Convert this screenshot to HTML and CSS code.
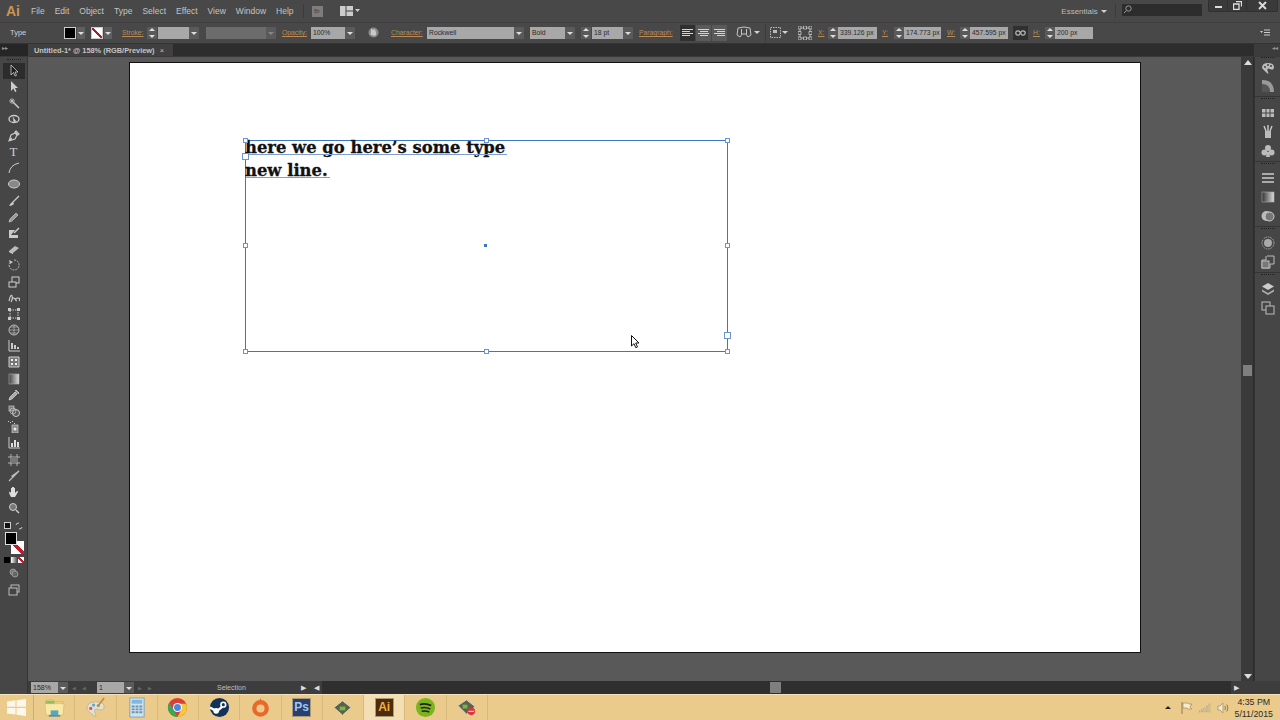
FILE: index.html
```html
<!DOCTYPE html>
<html lang="en">
<head>
    <meta charset="UTF-8">
    <title>Adobe Illustrator</title>
    <link rel="stylesheet" href="styles.css">
</head>
<body>
    <div class="app">
        <!-- menu bar -->
        <div class="menubar">
            <span class="ai-logo">Ai</span>
            <nav class="menu">
                <span>File</span><span>Edit</span><span>Object</span><span>Type</span><span>Select</span><span>Effect</span><span>View</span><span>Window</span><span>Help</span>
            </nav>
            <i class="menu-sep"></i>
            <span class="bridge">Br</span>
            <svg class="arrange" width="20" height="12" viewBox="0 0 20 12"><rect x="0" y="1" width="13" height="10" fill="#ccc"/><path d="M6 1v10M6 6h7" stroke="#444"/><path d="M15 4h5l-2.500 3z" fill="#ccc"/></svg>
            <span class="essentials">Essentials <b class="caret"></b></span>
            <i class="menu-sep sep-right"></i>
            <div class="search">
                <svg width="9" height="9" viewBox="0 0 9 9"><circle cx="5.500" cy="3.500" r="2.700" fill="none" stroke="#999"/><path d="M3.500 5.500L1 8" stroke="#999"/></svg>
            </div>
            <div class="win-btns">
                <span class="win-btn"><i class="win-min"></i></span>
                <span class="win-btn"><svg width="9" height="9" viewBox="0 0 9 9"><path d="M3 .5h5.500v5M.5 3h5.500v5.500h-5.500z" fill="none" stroke="#ddd" stroke-width="1.300"/></svg></span>
                <span class="win-btn win-close"><svg width="9" height="9" viewBox="0 0 9 9"><path d="M1 1l7 7M8 1l-7 7" stroke="#ddd" stroke-width="1.800"/></svg></span>
            </div>
        </div>

        <!-- control bar -->
        <div class="controlbar">
            <span class="ctl-type">Type</span>
            <span class="swatch swatch-black"></span><b class="drop"></b>
            <span class="swatch swatch-none ctl-stroke-swatch"></span><b class="drop"></b>
            <span class="label ctl-stroke">Stroke:</span>
            <span class="spin"></span><span class="field field-stroke"></span><b class="drop-box"></b>
            <span class="field field-dark"></span><b class="drop-box drop-dark"></b>
            <span class="label ctl-opacity">Opacity:</span>
            <span class="field field-opacity">100%</span><b class="drop-box"></b>
            <svg class="globe" width="11" height="11" viewBox="0 0 11 11"><circle cx="5.500" cy="5.500" r="5" fill="#8a8a8a"/><path d="M3 1.500q2 2 3 1t2 3-3 3-2-3z" fill="#c9c9c9"/></svg>
            <span class="label ctl-char">Character:</span>
            <span class="field field-font">Rockwell</span><b class="drop-box"></b>
            <span class="field field-weight">Bold</span><b class="drop-box"></b>
            <span class="spin ctl-size"></span><span class="field field-size">18 pt</span><b class="drop-box"></b>
            <span class="label ctl-para">Paragraph:</span>
            <div class="align-group">
                <span class="align-btn align-on"><i></i><i class="short"></i><i></i><i class="short"></i></span>
                <span class="align-btn"><i></i><i class="short mid"></i><i></i><i class="short mid"></i></span>
                <span class="align-btn"><i></i><i class="short end"></i><i></i><i class="short end"></i></span>
            </div>
            <svg class="ctl-envelope" width="16" height="13" viewBox="0 0 16 13"><path d="M2 2q6-2 12 0l1 7-3 2-2-3H6l-2 3-3-2zM5.500 3v5M10.500 3v5" fill="none" stroke="#c4c4c4"/></svg>
            <b class="caret ctl-caret"></b>
            <i class="ctl-sep"></i>
            <svg class="ctl-transform" width="11" height="11" viewBox="0 0 11 11"><rect x=".5" y=".5" width="10" height="10" fill="none" stroke="#bbb" stroke-dasharray="1.500 1"/><rect x="3" y="3" width="4" height="3" fill="#bbb"/></svg>
            <b class="caret"></b>
            <svg class="ctl-ref" width="14" height="14" viewBox="0 0 14 14"><path d="M2 2h10v10H2z" fill="none" stroke="#aaa"/><path d="M0 0h3v3H0zM5.500 0h3v3h-3zM11 0h3v3h-3zM0 5.500h3v3H0zM11 5.500h3v3h-3zM0 11h3v3H0zM5.500 11h3v3h-3zM11 11h3v3h-3z" fill="#444" stroke="#ccc" stroke-width=".8"/></svg>
            <span class="label ctl-x">X:</span>
            <span class="spin spin-tight"></span><span class="field field-x">339.126 px</span>
            <span class="label ctl-y">Y:</span>
            <span class="spin spin-tight"></span><span class="field field-y">174.773 px</span>
            <span class="label ctl-w">W:</span>
            <span class="spin spin-tight"></span><span class="field field-w">457.595 px</span>
            <span class="link-btn"><svg width="11" height="6" viewBox="0 0 11 6"><circle cx="3" cy="3" r="2.200" fill="none" stroke="#bbb" stroke-width="1.200"/><circle cx="8" cy="3" r="2.200" fill="none" stroke="#bbb" stroke-width="1.200"/></svg></span>
            <span class="label ctl-h">H:</span>
            <span class="spin spin-tight"></span><span class="field field-h">200 px</span>
            <svg class="ctl-menu" width="10" height="7" viewBox="0 0 10 7"><path d="M4 1h6M4 3.500h6M4 6h6" stroke="#ccc"/><path d="M0 2h3L1.500 4z" fill="#ccc"/></svg>
        </div>

        <!-- document tab -->
        <div class="tabstrip">
            <div class="corner">&#9656;&#9656;</div>
            <div class="doc-tab">Untitled-1* @ 158% (RGB/Preview) <span class="tab-x">&times;</span></div>
            <div class="corner corner-right">&#9666;&#9666;</div>
        </div>

        <div class="workspace">
            <!-- tools -->
            <aside class="tools" id="tools">
                <i class="grip"></i>
                <span class="tool tool-on"><svg viewBox="0 0 12 12"><path d="M3 0v10l2.500-2.500L7 11l1.500-.6L7 7h3z" fill="#1f1f1f" stroke="#ccc" stroke-width=".8"/></svg></span>
                <span class="tool"><svg viewBox="0 0 12 12"><path d="M3 0v10l2.500-2.500L7 11l1.500-.6L7 7h3z" fill="#ccc"/></svg></span>
                <span class="tool"><svg viewBox="0 0 12 12"><path d="M5 5l6 6" stroke="#ccc" stroke-width="1.500"/><path d="M4 1v6M1 4h6M2 2l4 4M6 2L2 6" stroke="#ccc" stroke-width=".8"/></svg></span>
                <span class="tool tool-end"><svg viewBox="0 0 12 12"><ellipse cx="6" cy="5" rx="5" ry="3.500" fill="none" stroke="#ccc" stroke-width="1.300"/><path d="M5 3l1 6 1.500-2 2 2" fill="#ccc" stroke="#ccc" stroke-width=".5"/></svg></span>
                <span class="tool"><svg viewBox="0 0 12 12"><path d="M1 11l2-6 4-2 2 2-2 4zM8 1l3 3-1 1-3-3zM1 11l3-3" fill="none" stroke="#ccc" stroke-width="1.100"/></svg></span>
                <span class="tool tool-t">T</span>
                <span class="tool"><svg viewBox="0 0 12 12"><path d="M1 11Q2 3 11 1" fill="none" stroke="#ccc"/></svg></span>
                <span class="tool"><svg viewBox="0 0 12 12"><ellipse cx="6" cy="6" rx="5.500" ry="4" fill="#888" stroke="#ccc"/></svg></span>
                <span class="tool"><svg viewBox="0 0 12 12"><path d="M11 1L4 8" stroke="#ccc" stroke-width="1.300"/><path d="M5 7Q2 8 1 11q3 0 5-2z" fill="#ccc"/></svg></span>
                <span class="tool"><svg viewBox="0 0 12 12"><path d="M1 11l1-3 6-6 2 2-6 6z" fill="#999" stroke="#ccc" stroke-width=".7"/></svg></span>
                <span class="tool"><svg viewBox="0 0 12 12"><path d="M1 3h6L3 8h7v3H1z" fill="#ccc"/><path d="M6 6l5-5" stroke="#ccc" stroke-width="1.500"/></svg></span>
                <span class="tool tool-end"><svg viewBox="0 0 12 12"><path d="M1 8l6-5 4 2-6 5z" fill="#bbb"/><path d="M1 8l4 2v1L1 9z" fill="#eee"/></svg></span>
                <span class="tool"><svg viewBox="0 0 12 12"><path d="M6 1a5 5 0 1 1-4.500 3" fill="none" stroke="#bbb" stroke-dasharray="2 1"/><path d="M1 1l1 4 3-2z" fill="#ccc"/></svg></span>
                <span class="tool"><svg viewBox="0 0 12 12"><rect x="4" y="1" width="7" height="6" fill="none" stroke="#ccc"/><rect x="1" y="6" width="7" height="5" fill="#444" stroke="#ccc"/></svg></span>
                <span class="tool"><svg viewBox="0 0 12 12"><path d="M1 9Q3 1 4 4T3 10q2-6 4-3t1 1 2-2 1 3" fill="none" stroke="#ccc" stroke-width="1.100"/></svg></span>
                <span class="tool"><svg viewBox="0 0 12 12"><rect x="2" y="2" width="8" height="8" fill="none" stroke="#ccc" stroke-dasharray="1.500 1"/><path d="M0 0h3v3H0zM9 0h3v3H9zM0 9h3v3H0zM9 9h3v3H9z" fill="#ccc"/></svg></span>
                <span class="tool"><svg viewBox="0 0 12 12"><circle cx="6" cy="6" r="5" fill="none" stroke="#bbb"/><path d="M1 6h10M6 1v10M2 3h8M2 9h8" stroke="#bbb" stroke-width=".7"/></svg></span>
                <span class="tool"><svg viewBox="0 0 12 12"><path d="M1 0v11h11" fill="none" stroke="#ccc"/><path d="M3 3h2v6H3zM6 5h2v4H6zM9 7h2v2H9z" fill="#ccc"/></svg></span>
                <span class="tool"><svg viewBox="0 0 12 12"><path d="M1 1h10v10H1z" fill="#777" stroke="#ccc"/><path d="M3 3h2v2H3zM7 3h2v2H7zM3 7h2v2H3zM7 7h2v2H7z" fill="#eee"/></svg></span>
                <span class="tool"><svg viewBox="0 0 12 12"><defs><linearGradient id="toolgrad"><stop offset="0" stop-color="#444"/><stop offset="1" stop-color="#ddd"/></linearGradient></defs><rect x="1" y="1" width="10" height="10" fill="url(#toolgrad)" stroke="#aaa" stroke-width=".6"/></svg></span>
                <span class="tool"><svg viewBox="0 0 12 12"><path d="M1 11l1-3 5-5 2 2-5 5zM7 2l1-1 3 3-1 1" fill="#aaa" stroke="#ddd" stroke-width=".7"/></svg></span>
                <span class="tool"><svg viewBox="0 0 12 12"><rect x="1" y="1" width="5" height="5" fill="#777" stroke="#ccc" stroke-width=".7"/><circle cx="8" cy="8" r="3.500" fill="#555" stroke="#ccc"/><circle cx="5" cy="6" r="3" fill="none" stroke="#ccc" stroke-width=".7"/></svg></span>
                <span class="tool"><svg viewBox="0 0 12 12"><rect x="4" y="4" width="6" height="8" fill="#888" stroke="#ccc" stroke-width=".7"/><circle cx="7" cy="8" r="1.500" fill="#eee"/><path d="M0 0h1v1H0zM2 1h1v1H2zM4 0h1v1H4zM6 2h1v1H6z" fill="#ccc"/></svg></span>
                <span class="tool"><svg viewBox="0 0 12 12"><path d="M1 0v11h11" fill="none" stroke="#ccc"/><path d="M3 6h2v4H3zM6 3h2v7H6zM9 5h2v5H9z" fill="#ddd"/></svg></span>
                <span class="tool"><svg viewBox="0 0 12 12"><path d="M3 0v12M9 0v12M0 3h12M0 9h12" stroke="#ccc" stroke-width=".8"/><rect x="3" y="3" width="6" height="6" fill="#777"/></svg></span>
                <span class="tool"><svg viewBox="0 0 12 12"><path d="M11 1L5 7 4 6zM5 7L1 11" stroke="#bbb" stroke-width="1.300"/></svg></span>
                <span class="tool"><svg viewBox="0 0 12 12"><path d="M3 11Q1 8 1 6q1-1 2 1V2h1v3-4h1v4-4h1v4-3h1v5l2-2q1 0 1 1l-3 5z" fill="#ddd"/></svg></span>
                <span class="tool"><svg viewBox="0 0 12 12"><circle cx="5" cy="5" r="3.500" fill="#777" stroke="#ccc"/><path d="M8 8l3 3" stroke="#ccc" stroke-width="1.500"/></svg></span>
                <div class="colors">
                    <div class="color-mini">
                        <span class="mini-swap"></span>
                        <svg width="8" height="8" viewBox="0 0 8 8"><path d="M1 3q0-2 3-2M7 5q0 2-3 2" fill="none" stroke="#ccc"/></svg>
                    </div>
                    <div class="fillstroke">
                        <span class="fs-stroke"></span>
                        <span class="fs-fill"></span>
                    </div>
                    <div class="color-modes"><i class="mode-black"></i><i class="mode-grad"></i><i class="mode-none"></i></div>
                    <span class="tool"><svg viewBox="0 0 12 12"><circle cx="5" cy="5" r="3" fill="#777" stroke="#999"/><circle cx="7" cy="7" r="3" fill="#666" stroke="#999"/></svg></span>
                    <span class="tool"><svg viewBox="0 0 12 12"><rect x="3" y="1" width="8" height="7" fill="none" stroke="#bbb"/><rect x="1" y="4" width="8" height="7" fill="#444" stroke="#bbb"/></svg></span>
                </div>
            </aside>

            <!-- pasteboard with artboard -->
            <main class="pasteboard">
                <div class="artboard">
                    <div class="textframe">
                        <p class="frame-text">here we go here&rsquo;s some type<br>new line.</p>
                        <i class="baseline base-1"></i>
                        <i class="baseline base-2"></i>
                        <i class="handle h-tl"></i><i class="handle h-tc"></i><i class="handle h-tr"></i>
                        <i class="handle h-ml"></i><i class="handle h-mr"></i>
                        <i class="handle h-bl"></i><i class="handle h-bc"></i><i class="handle h-br"></i>
                        <i class="port port-in"></i><i class="port port-out"></i>
                        <i class="center-dot"></i>
                    </div>
                    <svg class="cursor" width="9" height="14" viewBox="0 0 9 14"><path d="M.5.500v10.500l2.500-2.300 1.800 4 1.700-.8-1.800-3.900h3.300z" fill="#fff" stroke="#111"/></svg>
                </div>
            </main>

            <div class="vscroll">
                <b class="arrow-up"></b>
                <i class="thumb-v"></i>
                <b class="arrow-down"></b>
            </div>

            <!-- docked panels -->
            <aside class="panels">
                <div class="panel-group panel-first">
                    <i class="grip"></i>
                    <svg viewBox="0 0 14 14"><path d="M1 8q0-5 6-5t6 4-4 2-2 3-6-4z" fill="#bbb"/><circle cx="4" cy="7" r="1" fill="#444"/><circle cx="7" cy="5" r="1" fill="#444"/><circle cx="10" cy="6" r="1" fill="#444"/></svg>
                    <svg viewBox="0 0 14 14"><path d="M1 13V1q12 0 12 12z" fill="#999"/><path d="M1 13V5q8 0 8 8z" fill="#555"/></svg>
                </div>
                <div class="panel-group">
                    <i class="grip"></i>
                    <svg viewBox="0 0 14 14"><rect x="1" y="3" width="12" height="8" fill="#bbb"/><path d="M5 3v8M9 3v8M1 7h12" stroke="#444"/></svg>
                    <svg viewBox="0 0 14 14"><path d="M4 6h6v7H4z" fill="#bbb"/><path d="M5 6L3 1M7 6V0M9 6l2-5" stroke="#ccc" stroke-width="1.400"/></svg>
                    <svg viewBox="0 0 14 14"><circle cx="7" cy="4" r="3" fill="#bbb"/><circle cx="3.500" cy="8.500" r="3" fill="#bbb"/><circle cx="10.500" cy="8.500" r="3" fill="#bbb"/><path d="M6 8h2l1 5H5z" fill="#bbb"/></svg>
                </div>
                <div class="panel-group">
                    <i class="grip"></i>
                    <svg viewBox="0 0 14 14"><path d="M1 3h12M1 7h12M1 11h12" stroke="#ccc" stroke-width="1.300"/></svg>
                    <svg viewBox="0 0 14 14"><defs><linearGradient id="pgrad"><stop offset="0" stop-color="#333"/><stop offset="1" stop-color="#ddd"/></linearGradient></defs><rect x="1" y="2" width="12" height="10" fill="url(#pgrad)" stroke="#aaa" stroke-width=".6"/></svg>
                    <svg viewBox="0 0 14 14"><circle cx="5.500" cy="7" r="5" fill="#bbb"/><circle cx="8.500" cy="7.500" r="4.500" fill="#777" stroke="#ccc"/></svg>
                </div>
                <div class="panel-group">
                    <i class="grip"></i>
                    <svg viewBox="0 0 14 14"><circle cx="7" cy="7" r="6" fill="none" stroke="#aaa" stroke-dasharray="1.500 1"/><circle cx="7" cy="7" r="4" fill="#aaa"/></svg>
                    <svg viewBox="0 0 14 14"><path d="M6 1h7v8" fill="none" stroke="#bbb"/><path d="M5 1v4H1v8h8V9h4" fill="none" stroke="#bbb"/><rect x="1" y="6" width="7" height="7" fill="#777" stroke="#bbb"/></svg>
                </div>
                <div class="panel-group panel-last">
                    <i class="grip"></i>
                    <svg viewBox="0 0 14 14"><path d="M7 1l6 3.500L7 8 1 4.500z" fill="#ccc"/><path d="M1 7.500L7 11l6-3.500v2L7 13 1 9.500z" fill="#aaa"/></svg>
                    <svg viewBox="0 0 14 14"><rect x="1" y="1" width="8" height="8" fill="none" stroke="#bbb"/><rect x="5" y="5" width="8" height="8" fill="#444" stroke="#bbb"/></svg>
                </div>
            </aside>
        </div>

        <!-- status bar -->
        <div class="statusbar">
            <span class="status-side"></span>
            <span class="field field-zoom">158%</span><b class="drop-box"></b>
            <span class="nav nav-first">&#9664;</span><span class="nav">&#9664;</span>
            <span class="field field-page">1</span><b class="drop-box"></b>
            <span class="nav">&#9654;</span><span class="nav">&#9654;</span>
            <span class="status-text">Selection</span>
            <span class="status-arrow">&#9654;</span>
            <span class="status-arrow left">&#9664;</span>
            <div class="hscroll"><i class="thumb-h"></i></div>
            <span class="status-arrow right">&#9654;</span>
        </div>

        <!-- windows taskbar -->
        <footer class="taskbar">
            <span class="start">
                <svg width="19" height="17" viewBox="0 0 19 17"><path d="M0 2.500L8.500 1.300v6.500H0zM9.500 1.200L19 0v7.800H9.500zM0 9h8.500v6.600L0 14.400zM9.500 9H19v8l-9.500-1.300z" fill="#fdf7ea"/></svg>
            </span>
            <span class="task">
                <svg viewBox="0 0 22 22"><path d="M2 3h7l2 2h9v5H2z" fill="#f1d878" stroke="#c9a94e" stroke-width=".6"/><path d="M1 7h20l-1 12H2z" fill="#f8e9a6" stroke="#cfb45e" stroke-width=".6"/><path d="M2 4h9v3H2z" fill="#8fbf6e"/><path d="M7 14h8v5H7z" fill="#58a6c4"/><path d="M5 19h12v1.500H5z" fill="#3f86a6"/></svg>
            </span>
            <span class="task">
                <svg viewBox="0 0 22 22"><path d="M2 13q0-8 9-8t9 5-6 3-3 5-9-5z" fill="#e6e0d2" stroke="#a9a08e" stroke-width=".6"/><circle cx="6" cy="12" r="1.700" fill="#d9534f"/><circle cx="9" cy="8.500" r="1.700" fill="#5aa9c9"/><circle cx="14" cy="9" r="1.700" fill="#6fb35a"/><path d="M20 1l-6 8" stroke="#c98b3c" stroke-width="1.800"/></svg>
            </span>
            <span class="task">
                <svg viewBox="0 0 22 22"><rect x="4" y="1" width="15" height="20" fill="#cfe3ef" stroke="#7fa3bd"/><rect x="6" y="3" width="11" height="4" fill="#7fb8dc"/><path d="M6 9h3v2H6zM10 9h3v2h-3zM14 9h3v2h-3zM6 12h3v2H6zM10 12h3v2h-3zM14 12h3v2h-3zM6 15h3v2H6zM10 15h3v2h-3zM14 15h3v2h-3z" fill="#6f95b0"/></svg>
            </span>
            <span class="task">
                <svg viewBox="0 0 22 22"><circle cx="11" cy="11" r="10" fill="#d93f36"/><path d="M11 21A10 10 0 0 1 2.300 6L7 13l4 8z" fill="#3ea552"/><path d="M11 21a10 10 0 0 0 9-14H11l4 6z" fill="#f5c93c"/><circle cx="11" cy="11" r="4.700" fill="#fff"/><circle cx="11" cy="11" r="3.600" fill="#4a87e0"/></svg>
            </span>
            <span class="task">
                <svg viewBox="0 0 22 22"><circle cx="11" cy="11" r="10" fill="#12335a"/><path d="M1 11l7 4 5-4 3-4" stroke="#fff" stroke-width="2.500" fill="none"/><circle cx="15" cy="8" r="3.300" fill="#fff"/><circle cx="15" cy="8" r="1.600" fill="#12335a"/><circle cx="7.500" cy="14.500" r="3" fill="#fff"/></svg>
            </span>
            <span class="task">
                <svg viewBox="0 0 22 22"><circle cx="11" cy="12" r="6.500" fill="none" stroke="#e9692c" stroke-width="4.500"/><path d="M11 1l2 5h-4z" fill="#e9692c"/></svg>
            </span>
            <span class="task">
                <span class="app-ps">Ps</span>
            </span>
            <span class="task">
                <svg viewBox="0 0 22 22"><path d="M2 11l9-7 9 7-9 8z" fill="#59604d" stroke="#d9d4c4"/><path d="M8 10h6v4H8z" fill="#79b83a"/></svg>
            </span>
            <span class="task task-on">
                <span class="app-ai">Ai</span>
            </span>
            <span class="task">
                <svg viewBox="0 0 22 22"><circle cx="11" cy="11" r="10" fill="#7ab51d"/><path d="M5 8q6-2 12 1M6 11.500q5-1.500 10 1M7 15q4-1 8 .8" fill="none" stroke="#222" stroke-width="1.700"/></svg>
            </span>
            <span class="task">
                <svg viewBox="0 0 22 22"><path d="M2 9l9-6 9 7-9 8z" fill="#5c6250" stroke="#d9d4c4"/><path d="M7 8h5v4H7z" fill="#79b83a"/><circle cx="16" cy="15" r="4" fill="#d9363a"/><path d="M13 15h6" stroke="#eee"/></svg>
            </span>
            <div class="tray">
                <b class="tray-up"></b>
                <svg width="12" height="12" viewBox="0 0 12 12"><path d="M1 0v12" stroke="#8b7a50"/><path d="M2 1h5l1 1h3l-2 3 2 2H7L6 6H2z" fill="#f6ead0" stroke="#8b7a50" stroke-width=".6"/></svg>
                <svg width="12" height="10" viewBox="0 0 12 10"><path d="M0 9h1V8H0zM2.500 9h1V6.500h-1zM5 9h1V5H5zM7.500 9h1V3h-1zM10 9h1V1h-1z" fill="#f8f0dc" stroke="#8b7a50" stroke-width=".4"/></svg>
                <svg width="12" height="12" viewBox="0 0 12 12"><path d="M1 4h2l3-3v10L3 8H1z" fill="#f6ead0" stroke="#8b7a50" stroke-width=".6"/><path d="M8 4q1 2 0 4M10 2.500q2 3.500 0 7" fill="none" stroke="#8b7a50"/></svg>
                <div class="clock"><span>4:35 PM</span><span>5/11/2015</span></div>
            </div>
        </footer>
    </div>
</body>
</html>
```

FILE: styles.css
```css
* {
    margin: 0;
    padding: 0;
    box-sizing: border-box;
}

body {
    font-family: 'Liberation Sans', Arial, sans-serif;
    background: #535353;
    overflow: hidden;
}

.app {
    width: 1280px;
    height: 720px;
    display: flex;
    flex-direction: column;
}

/* menu bar */
.menubar {
    height: 22px;
    flex: none;
    display: flex;
    align-items: center;
    background: #484848;
    color: #c4c4c4;
    font-size: 8.5px;
    position: relative;
}

.ai-logo {
    width: 31px;
    padding-left: 6px;
    font-size: 14px;
    font-weight: bold;
    color: #c9964f;
}

.menu {
    display: flex;
    gap: 10px;
}

.menu-sep {
    width: 1px;
    height: 14px;
    margin-left: 9px;
    background: #3b3b3b;
}

.bridge {
    width: 11px;
    height: 11px;
    margin-left: 8px;
    background: #7d7d7d;
    color: #444;
    font-size: 6px;
    line-height: 11px;
    text-align: center;
}

.arrange {
    margin-left: 17px;
}

.essentials {
    margin-left: auto;
    font-size: 8px;
    color: #bcbcbc;
}

.sep-right {
    margin: 0 6px 0 8px;
}

.search {
    width: 80px;
    height: 12px;
    margin-right: 6px;
    padding: 1px 0 0 1px;
    background: #2d2d2d;
    align-self: flex-start;
    margin-top: 4px;
}

.win-btns {
    display: flex;
    height: 12px;
    margin-right: 2px;
    align-self: flex-start;
    background: #3a3a3a;
    border: 1px solid #303030;
    border-top: none;
    border-radius: 0 0 2px 2px;
}

.win-btn {
    width: 19px;
    display: flex;
    align-items: center;
    justify-content: center;
    border-right: 1px solid #303030;
}

.win-close {
    width: 30px;
    border-right: none;
}

.win-min {
    width: 7px;
    height: 2px;
    margin-top: 3px;
    background: #ddd;
}

/* control bar */
.controlbar {
    height: 22px;
    flex: none;
    display: flex;
    align-items: center;
    padding-bottom: 1px;
    background: #484848;
    border-top: 1px solid #3e3e3e;
    border-bottom: 1px solid #333;
    font-size: 6.800px;
    color: #2a2a2a;
}

.ctl-type {
    margin-left: 10px;
    width: 54px;
    font-size: 7.500px;
    color: #cfcfcf;
}

.swatch {
    width: 12px;
    height: 12px;
    border: 1px solid #ccc;
}

.swatch-black {
    background: #000;
}

.swatch-none {
    background: linear-gradient(to top right, #fff 44%, #b5172c 44%, #b5172c 56%, #fff 56%);
}

.ctl-stroke-swatch {
    margin-left: 6px;
}

.drop {
    width: 8px;
    height: 12px;
    margin-left: 1px;
    background: #5f5f5f;
    position: relative;
}

.drop::after,
.drop-box::after {
    content: "";
    position: absolute;
    left: 50%;
    top: 50%;
    margin: -1px 0 0 -3px;
    border-left: 3px solid transparent;
    border-right: 3px solid transparent;
    border-top: 3px solid #ddd;
}

.drop-box {
    width: 10px;
    height: 12px;
    background: #5a5a5a;
    position: relative;
}

.drop-dark::after {
    border-top-color: #888;
}

.label {
    color: #b98c57;
    text-decoration: underline;
    font-size: 6.800px;
    white-space: nowrap;
}

.field {
    height: 12px;
    background: #a8a8a8;
    line-height: 12px;
    padding-left: 2px;
    white-space: nowrap;
    overflow: hidden;
}

.spin {
    width: 10px;
    height: 12px;
    margin-right: 1px;
    background: #5a5a5a;
    position: relative;
}

.spin-tight {
    margin-right: 0;
}

.spin::before,
.spin::after {
    content: "";
    position: absolute;
    left: 2px;
    border-left: 3px solid transparent;
    border-right: 3px solid transparent;
}

.spin::before {
    top: 1px;
    border-bottom: 3px solid #ddd;
}

.spin::after {
    bottom: 1px;
    border-top: 3px solid #ddd;
}

.ctl-stroke { width: 25px; margin-left: 10px; }
.field-stroke { width: 31px; }
.field-dark { width: 60px; margin-left: 7px; background: #6c6c6c; }
.ctl-opacity { width: 29px; margin-left: 6px; }
.field-opacity { width: 34px; }
.globe { margin-left: 13px; }
.ctl-char { width: 36px; margin-left: 12px; }
.field-font { width: 87px; }
.field-weight { width: 35px; margin-left: 6px; }
.ctl-size { margin-left: 6px; }
.field-size { width: 31px; }
.ctl-para { width: 41px; margin-left: 6px; }

.align-group {
    display: flex;
    height: 16px;
}

.align-btn {
    width: 16px;
    height: 16px;
    background: #5a5a5a;
    border-right: 1px solid #484848;
    display: flex;
    flex-direction: column;
    justify-content: center;
    gap: 1px;
    padding: 0 2px;
}

.align-on {
    background: #303030;
}

.align-btn i {
    display: block;
    height: 1px;
    background: #d5d5d5;
}

.align-btn i.short { width: 8px; }
.align-btn i.mid { margin: 0 auto; }
.align-btn i.end { margin-left: auto; }

.ctl-envelope { margin-left: 8px; }
.ctl-sep { width: 1px; height: 18px; background: #3c3c3c; margin: 0 4px 0 5px; }
.caret {
    display: inline-block;
    border-left: 3px solid transparent;
    border-right: 3px solid transparent;
    border-top: 3px solid #d0d0d0;
    vertical-align: middle;
    margin-left: 1px;
}
.ctl-caret { margin-left: 2px; }
.ctl-ref { margin-left: 10px; }
.ctl-x { width: 10px; margin-left: 6px; }
.field-x { width: 39px; }
.ctl-y { width: 12px; margin-left: 5px; }
.field-y { width: 37px; }
.ctl-w { width: 13px; margin-left: 6px; }
.field-w { width: 38px; }
.link-btn {
    width: 15px;
    height: 14px;
    margin-left: 5px;
    background: #303030;
    display: flex;
    align-items: center;
    justify-content: center;
}
.ctl-h { width: 12px; margin-left: 5px; }
.field-h { width: 38px; }
.ctl-menu { margin-left: auto; margin-right: 10px; }

/* document tab */
.tabstrip {
    height: 13px;
    flex: none;
    display: flex;
    background: #2d2d2d;
    border-bottom: 1px solid #3a3a3a;
}

.corner {
    width: 28px;
    color: #999;
    font-size: 6px;
    line-height: 9px;
    padding-left: 2px;
    background: #262626;
}

.corner-right {
    margin-left: auto;
    width: 26px;
    text-align: right;
    padding: 0 2px 0 0;
    background: #3c3c3c;
}

.doc-tab {
    width: 145px;
    padding-left: 6px;
    background: #404040;
    color: #c4c4c4;
    font-size: 7.400px;
    font-weight: bold;
    line-height: 13px;
    white-space: nowrap;
}

.tab-x {
    margin-left: 3px;
    font-weight: normal;
}

/* main area */
.workspace {
    flex: 1;
    display: flex;
    min-height: 0;
}

.tools {
    width: 28px;
    flex: none;
    padding-top: 2px;
    background: #464646;
    border-right: 1px solid #353535;
    display: flex;
    flex-direction: column;
    align-items: center;
}

.grip {
    display: block;
    width: 14px;
    height: 4px;
    flex: none;
    border-top: 1px dotted #222;
}

.tool {
    width: 22px;
    height: 16.200px;
    flex: none;
    display: flex;
    align-items: center;
    justify-content: center;
    color: #ccc;
}

.tool svg {
    width: 12px;
    height: 12px;
}

.tool-on {
    background: #2c2c2c;
}

.tool-t {
    font-family: 'Liberation Serif', serif;
    font-size: 13px;
}

.colors {
    display: flex;
    flex-direction: column;
    align-items: center;
    margin-top: 3px;
    padding-top: 2px;
    width: 100%;
}

.color-mini {
    display: flex;
    gap: 4px;
    align-items: center;
    height: 9px;
}

.mini-swap {
    width: 7px;
    height: 7px;
    background: #111;
    border: 1px solid #ccc;
}

.fillstroke {
    width: 20px;
    height: 22px;
    position: relative;
    margin-top: 2px;
}

.fs-fill {
    position: absolute;
    left: 1px;
    top: 0;
    width: 12px;
    height: 13px;
    background: #000;
    border: 1px solid #ddd;
}

.fs-stroke {
    position: absolute;
    right: 0;
    bottom: 0;
    width: 13px;
    height: 13px;
    background: linear-gradient(to top right, #fff 42%, #c01c30 42%, #c01c30 58%, #fff 58%);
}

.color-modes {
    display: flex;
    gap: 1px;
    margin: 3px 0 2px;
}

.color-modes i {
    width: 6px;
    height: 6px;
}

.mode-black { background: #000; }
.mode-grad { background: linear-gradient(to right, #fff, #555); }
.mode-none { background: linear-gradient(to top right, #fff 40%, #c01c30 40%, #c01c30 60%, #fff 60%); }

.pasteboard {
    width: 1213px;
    flex: none;
    padding: 5px 0 0 101px;
    background: #595959;
}

.artboard {
    width: 1012px;
    height: 591px;
    background: #fff;
    border: 1px solid #111;
    position: relative;
}

.textframe {
    position: absolute;
    left: 115px;
    top: 77px;
    width: 483px;
    height: 212px;
    border: 1px solid #3f74cc;
}

.frame-text {
    margin: -5px 0 0 -1px;
    font-family: 'DejaVu Serif', serif;
    font-weight: bold;
    font-size: 16.400px;
    line-height: 23px;
    color: #111;
    -webkit-text-stroke: 0.3px #111;
    white-space: nowrap;
}

.baseline {
    position: absolute;
    left: 0;
    height: 1px;
    background: #7e9fd6;
}

.base-1 { top: 13px; width: 261px; }
.base-2 { top: 36px; width: 84px; }

.handle {
    position: absolute;
    width: 5px;
    height: 5px;
    background: #fff;
    border: 1px solid #6c93d4;
}

.h-tl { left: -3px; top: -3px; }
.h-tc { left: 238px; top: -3px; }
.h-tr { right: -3px; top: -3px; }
.h-ml { left: -3px; top: 102px; }
.h-mr { right: -3px; top: 102px; }
.h-bl { left: -3px; bottom: -3px; }
.h-bc { left: 238px; bottom: -3px; }
.h-br { right: -3px; bottom: -3px; }

.port {
    position: absolute;
    width: 7px;
    height: 7px;
    background: #fff;
    border: 1px solid #6c93d4;
}

.port-in { left: -4px; top: 12px; }
.port-out { right: -4px; bottom: 12px; }

.center-dot {
    position: absolute;
    left: 238px;
    top: 103px;
    width: 3px;
    height: 3px;
    background: #3f72c8;
}

.cursor {
    position: absolute;
    left: 501px;
    top: 272px;
}

.vscroll {
    width: 13px;
    flex: none;
    background: #3a3a3a;
    border-right: 1px solid #2c2c2c;
    position: relative;
}

.arrow-up,
.arrow-down {
    position: absolute;
    left: 3px;
    border-left: 4px solid transparent;
    border-right: 4px solid transparent;
}

.arrow-up {
    top: 3px;
    border-bottom: 5px solid #ddd;
}

.arrow-down {
    bottom: 2px;
    border-top: 5px solid #ddd;
}

.thumb-v {
    position: absolute;
    left: 2px;
    top: 308px;
    width: 9px;
    height: 11px;
    background: #7f7f7f;
}

.panels {
    flex: 1;
    background: #464646;
    border-left: 1px solid #333;
}

.panel-group {
    display: flex;
    flex-direction: column;
    align-items: center;
    gap: 5px;
    padding-bottom: 3px;
    border-bottom: 1px solid #353535;
}

.panel-group svg {
    width: 14px;
    height: 14px;
    flex: none;
}

.panel-group .grip {
    margin-top: 1px;
    margin-bottom: -1px;
}

.panel-first .grip {
    margin-top: 0;
    margin-bottom: -6px;
}

.panel-last {
    border-bottom: none;
}

/* status bar */
.statusbar {
    height: 13px;
    flex: none;
    display: flex;
    align-items: center;
    background: #3d3d3d;
    color: #b5b5b5;
    font-size: 7px;
    position: relative;
}

.status-side {
    width: 28px;
    height: 100%;
    margin-right: 3px;
    background: #464646;
    border-right: 1px solid #353535;
}

.statusbar .field {
    color: #2a2a2a;
    height: 11px;
    line-height: 11px;
}

.statusbar .drop-box {
    height: 11px;
}

.field-zoom { width: 27px; }
.field-page { width: 27px; margin-left: 9px; }

.nav {
    width: 9px;
    margin-left: 1px;
    color: #666;
    font-size: 5px;
    text-align: center;
}

.status-text {
    width: 103px;
    margin-left: 39px;
    text-align: left;
    padding-left: 24px;
    color: #bdbdbd;
}

.status-arrow {
    width: 12px;
    margin-left: 1px;
    font-size: 7px;
    color: #ddd;
    text-align: center;
}

.hscroll {
    flex: 1;
    height: 100%;
    background: #2f2f2f;
    position: relative;
}

.thumb-h {
    position: absolute;
    left: 448px;
    top: 1px;
    width: 11px;
    height: 11px;
    background: #7f7f7f;
}

.status-arrow.right {
    width: 48px;
    text-align: left;
    padding-left: 2px;
}

/* taskbar */
.taskbar {
    height: 26px;
    flex: none;
    display: flex;
    background: #ebcb8c;
    border-top: 1px solid #f6e3ba;
}

.start {
    width: 34px;
    display: flex;
    align-items: center;
    padding-left: 7px;
    border-right: 1px solid #c9ad74;
}

.task {
    width: 41.250px;
    display: flex;
    align-items: center;
    justify-content: center;
    border-right: 1px solid #d8b97c;
}

.task svg {
    width: 21px;
    height: 21px;
}

.task-on {
    background: #f4dfb4;
}

.app-ps,
.app-ai {
    width: 19px;
    height: 19px;
    font-size: 12px;
    font-weight: bold;
    line-height: 17px;
    text-align: center;
    border: 1px solid #a89a78;
}

.app-ps {
    background: #2a3f6e;
    color: #9cc7ee;
}

.app-ai {
    background: #4c2c0c;
    color: #f0b040;
}

.tray {
    margin-left: auto;
    width: 118px;
    display: flex;
    align-items: center;
    gap: 6px;
    padding-left: 3px;
}

.tray-up {
    border-left: 3px solid transparent;
    border-right: 3px solid transparent;
    border-bottom: 3px solid #222;
    margin-right: 4px;
}

.clock {
    display: flex;
    flex-direction: column;
    align-items: center;
    margin-left: auto;
    margin-right: 7px;
    font-size: 8.800px;
    line-height: 12px;
    color: #2a2a2a;
}
```
